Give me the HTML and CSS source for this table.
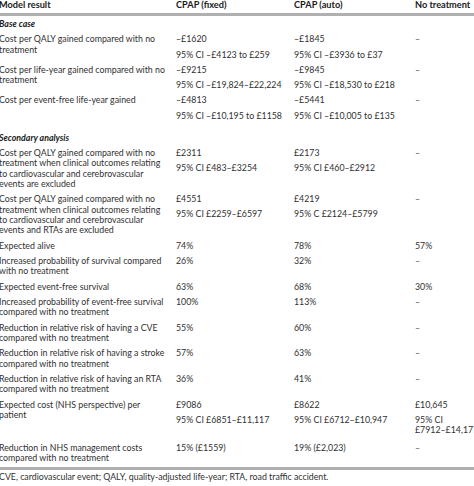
FILE: index.html
```html
<!DOCTYPE html>
<html>
<head>
<meta charset="utf-8">
<link rel="stylesheet" href="styles.css">
</head>
<body>
<div class="page">
<table class="results">
  <colgroup>
    <col class="c1"><col class="c2"><col class="c3"><col class="c4">
  </colgroup>
  <thead>
    <tr><th>Model result</th><th>CPAP (fixed)</th><th>CPAP (auto)</th><th>No treatment</th></tr>
  </thead>
  <tbody>
    <tr class="section first"><td colspan="4">Base case</td></tr>
    <tr>
      <td>Cost per QALY gained compared with no<br>treatment</td>
      <td><div>–£1620</div><div class="ci">95% CI –£4123 to £259</div></td>
      <td><div>–£1845</div><div class="ci">95% CI –£3936 to £37</div></td>
      <td class="dash">–</td>
    </tr>
    <tr>
      <td>Cost per life-year gained compared with no<br>treatment</td>
      <td><div>–£9215</div><div class="ci">95% CI –£19,824–£22,224</div></td>
      <td><div>–£9845</div><div class="ci">95% CI –£18,530 to £218</div></td>
      <td class="dash">–</td>
    </tr>
    <tr>
      <td>Cost per event-free life-year gained</td>
      <td><div>–£4813</div><div class="ci">95% CI –£10,195 to £1158</div></td>
      <td><div>–£5441</div><div class="ci">95% CI –£10,005 to £135</div></td>
      <td class="dash">–</td>
    </tr>
    <tr class="section"><td colspan="4">Secondary analysis</td></tr>
    <tr>
      <td>Cost per QALY gained compared with no<br>treatment when clinical outcomes relating<br>to cardiovascular and cerebrovascular<br>events are excluded</td>
      <td><div>£2311</div><div class="ci">95% CI £483–£3254</div></td>
      <td><div>£2173</div><div class="ci">95% CI £460–£2912</div></td>
      <td class="dash">–</td>
    </tr>
    <tr>
      <td>Cost per QALY gained compared with no<br>treatment when clinical outcomes relating<br>to cardiovascular and cerebrovascular<br>events and RTAs are excluded</td>
      <td><div>£4551</div><div class="ci">95% CI £2259–£6597</div></td>
      <td><div>£4219</div><div class="ci">95% C £2124–£5799</div></td>
      <td class="dash">–</td>
    </tr>
    <tr>
      <td>Expected alive</td><td>74%</td><td>78%</td><td>57%</td>
    </tr>
    <tr>
      <td>Increased probability of survival compared<br>with no treatment</td><td>26%</td><td>32%</td><td class="dash">–</td>
    </tr>
    <tr>
      <td>Expected event-free survival</td><td>63%</td><td>68%</td><td>30%</td>
    </tr>
    <tr>
      <td>Increased probability of event-free survival<br>compared with no treatment</td><td>100%</td><td>113%</td><td class="dash">–</td>
    </tr>
    <tr>
      <td>Reduction in relative risk of having a CVE<br>compared with no treatment</td><td>55%</td><td>60%</td><td class="dash">–</td>
    </tr>
    <tr>
      <td>Reduction in relative risk of having a stroke<br>compared with no treatment</td><td>57%</td><td>63%</td><td class="dash">–</td>
    </tr>
    <tr>
      <td>Reduction in relative risk of having an RTA<br>compared with no treatment</td><td>36%</td><td>41%</td><td class="dash">–</td>
    </tr>
    <tr class="cost">
      <td>Expected cost (NHS perspective) per<br>patient</td>
      <td><div>£9086</div><div class="ci">95% CI £6851–£11,117</div></td>
      <td><div>£8622</div><div class="ci">95% CI £6712–£10,947</div></td>
      <td><div>£10,645</div><div class="ci tight"><div>95% CI</div><div>£7912–£14,177</div></div></td>
    </tr>
    <tr class="last">
      <td>Reduction in NHS management costs<br>compared with no treatment</td><td>15% (£1559)</td><td>19% (£2,023)</td><td class="dash">–</td>
    </tr>
  </tbody>
</table>
<p class="note">CVE, cardiovascular event; QALY, quality-adjusted life-year; RTA, road traffic accident.</p>
</div>
</body>
</html>
```

FILE: styles.css
```css
html, body {
  margin: 0;
  padding: 0;
  background: #ffffff;
}
body {
  width: 474px;
  height: 486px;
  overflow: hidden;
  font-family: Lato, "Open Sans", sans-serif;
  font-size: 8.8px;
  line-height: 10.3px;
  color: #303030;
}
.page {
  margin-left: -1px;
  width: 500px;
}
.results {
  border-collapse: collapse;
  table-layout: fixed;
  width: 500px;
}
.results col.c1 { width: 177px; }
.results col.c2 { width: 118px; }
.results col.c3 { width: 121px; }
.results col.c4 { width: 84px; }
.results th {
  text-align: left;
  font-weight: 700;
  font-size: 9.2px;
  color: #1a1a1a;
  padding: 0 0 3.2px 0;
  border-bottom: 3px solid #b0b0b0;
  white-space: nowrap;
  vertical-align: top;
}
.results td {
  padding: 2.55px 0;
  vertical-align: top;
  white-space: nowrap;
}
.results td.dash {
  color: #555555;
}
.results .section td {
  font-weight: 700;
  font-style: italic;
  color: #1a1a1a;
  padding-top: 9.3px;
}
.results .section.first td {
  padding-top: 2.6px;
}
.results .ci {
  margin-top: 4.8px;
}
.results .ci.tight {
  line-height: 10.3px;
}
.results tr.cost td {
  padding-bottom: 4.6px;
}
.results tr.last td {
  padding-bottom: 3.5px;
  border-bottom: 3px solid #b0b0b0;
}
.note {
  margin: 1.9px 0 0 0;
  white-space: nowrap;
}
```
